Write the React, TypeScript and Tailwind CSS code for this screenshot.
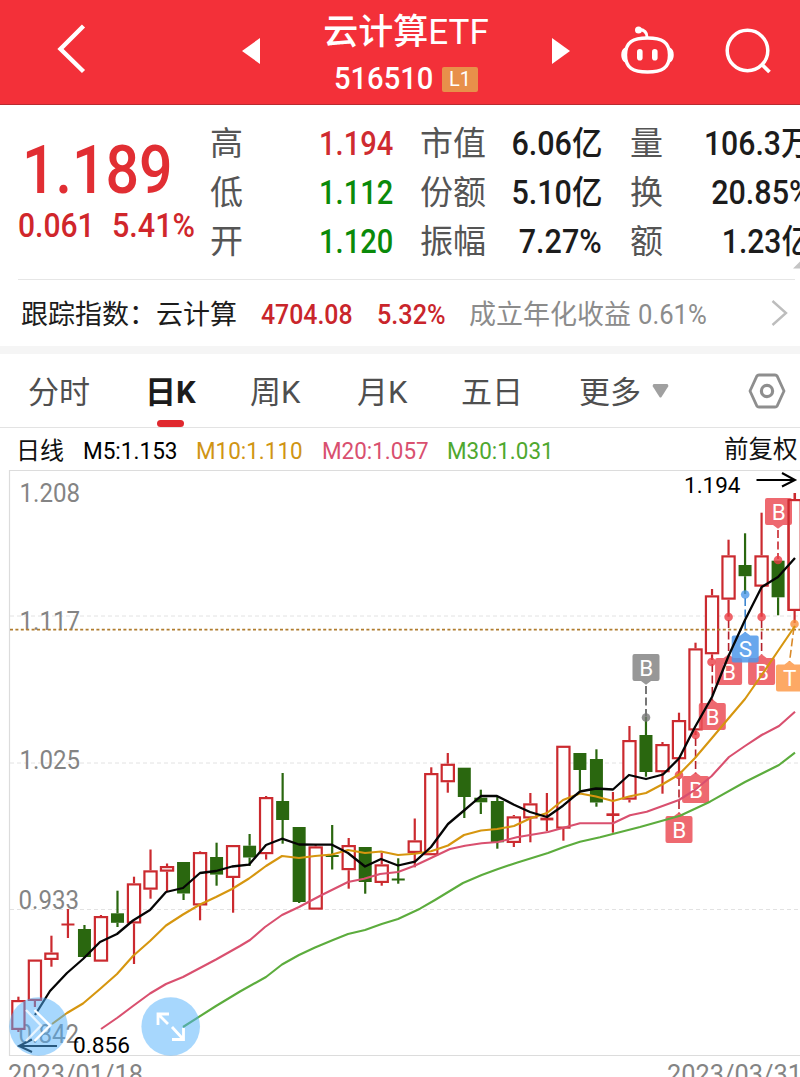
import React from "react";

type Candle = { up: boolean; high: number; top: number; bottom: number; low: number };

const c = (kind: "r" | "g", high: number, top: number, bottom: number, low: number): Candle => ({
  up: kind === "r",
  high,
  top,
  bottom,
  low,
});

const candles: Candle[] = [
  c("r", 996.7, 1000, 1030, 1032),
  c("r", 959.5, 959.5, 1001, 1007),
  c("r", 935.7, 952.5, 960, 966.7),
  c("r", 909, 923.5, 925.5, 938),
  c("g", 925, 929, 957, 957.5),
  c("r", 915, 916, 961.7, 961.7),
  c("g", 890.7, 913.3, 922.8, 927),
  c("r", 876.7, 883.3, 923.5, 964),
  c("r", 849.5, 870.3, 889.7, 898.7),
  c("r", 863.5, 866, 871.7, 891.5),
  c("g", 862, 862, 893.5, 900),
  c("r", 851.3, 852, 905.5, 920.3),
  c("g", 842.7, 857, 874.6, 885.7),
  c("r", 845, 845, 878, 912.7),
  c("g", 834, 845.7, 857.5, 866),
  c("r", 796, 797, 854.2, 859.5),
  c("g", 773, 801, 820, 843.7),
  c("g", 827, 827, 902, 903),
  c("r", 845, 846.3, 909.7, 909.7),
  c("g", 825, 855, 857, 869.5),
  c("r", 838, 845, 870.2, 888.7),
  c("g", 847, 847, 882, 893.7),
  c("r", 852.7, 864.3, 883, 885.7),
  c("g", 858.3, 878.5, 880.5, 883.7),
  c("r", 818.5, 840.3, 853, 867.3),
  c("r", 767.3, 773, 855.3, 855.3),
  c("r", 753, 763.7, 782.3, 792.7),
  c("g", 767.7, 767.7, 797, 818),
  c("g", 789.7, 797.7, 802.3, 814),
  c("g", 796, 801, 842.3, 848.7),
  c("r", 815, 816.3, 843, 847),
  c("r", 793, 803.3, 818.5, 842.3),
  c("r", 793, 817.6, 820.4, 831),
  c("r", 745.7, 745.7, 828.7, 840.7),
  c("g", 753, 753, 770, 790.7),
  c("g", 749.3, 759, 802.5, 806.7),
  c("r", 792, 813.3, 816, 832.7),
  c("r", 726, 740, 799.7, 802.5),
  c("g", 716.7, 735, 772, 776.7),
  c("r", 742, 744, 772.3, 793.7),
  c("r", 712.7, 720, 759.3, 775),
  c("r", 642.7, 648.3, 730.5, 735),
  c("r", 589, 595.3, 654.3, 660),
  c("r", 539.7, 555.3, 599.7, 616.7),
  c("g", 533.3, 565, 576.2, 594),
  c("r", 512.7, 555.3, 586.7, 616.7),
  c("g", 560.7, 560.7, 597.3, 615.3),
  c("r", 493, 499, 611, 623),
];

const candleX = (i: number) => 18.4 + i * 16.515;

const ma5 =
  "35,1015 50,991 67,973 83,959 100,942 117,934 133,920.5 150,910 166,892 183,888 200,873 216,871 232,866.5 249,864.7 266,845 282,838.7 299,844.5 315,844.7 332,844.7 348,853 365,866.5 381,859 398,865.5 415,861.7 431,847 448,824 464,810.5 481,796 497,796 514,804.7 530,812 547,817 563,805.7 580,791.5 596,788.5 613,789.5 629,775 646,779 663,774.5 679,758.5 695,727 712,697 728.5,656 745,620 761.7,587 778,577 795,558";
const ma10 =
  "52,1024 67,1013 83,1003.5 100,989 117,974 133,956 150,941 166,925.5 183,914.5 200,904.5 216,897 232,889 249,878.5 266,866 282,856 299,858 315,856 332,854.5 348,850 365,853 381,851.5 398,855 415,853.7 431,851.3 448,845.5 464,835 481,830.5 497,829 514,826 530,818.5 547,813 563,800 580,793.5 596,796.5 613,801 629,796.5 646,793 663,784 679,774.5 695,758 712,738 728,719 745,699 761,676 778,651 795,626";
const ma20 =
  "101,1029 117,1018 133,1006 150,993.5 166,984 183,977 216,959.5 240,946 250,940 265,927 282,915 299,907 321.7,895 348,882 364,878.7 380,874 398,872 414,866 431,858 450,849 465,845.7 481.7,843.3 498,842 516.7,837.3 548,832 580,823.3 613,823.3 630,815.3 646.7,811.7 679,800 695.7,789.3 711.7,776 729,757 745,746 761.7,735 779,726 795,711.7";
const ma30 =
  "183,1027 216,1006 240,991.5 266,977 282,964.5 299,955 315,947.5 333,940 348,934 365,930 381.7,924 398,919 420,908.7 435,900 463,883 481.7,875 498,869 516.7,862.7 548,853 564,847 580,841.7 600,837.3 640,827 680,815.7 710,801.7 745,782 779,765 795,752.7";

function CandleShape({ d, x }: { d: Candle; x: number }) {
  const color = d.up ? "#cb2a2f" : "#2a670f";
  const h = d.bottom - d.top;
  if (h < 3.5) {
    return (
      <g fill={color}>
        <rect x={x - 1.1} y={d.high} width={2.2} height={d.low - d.high} />
        <rect x={x - 6.5} y={d.top} width={13} height={h} />
      </g>
    );
  }
  return (
    <g fill={color}>
      <rect x={x - 1.1} y={d.high} width={2.2} height={d.top - d.high} />
      <rect x={x - 1.1} y={d.bottom} width={2.2} height={Math.max(0, d.low - d.bottom)} />
      {d.up ? (
        <rect x={x - 6.1} y={d.top + 1.1} width={12.2} height={h - 2.2} fill="#fff" stroke={color} strokeWidth={2.2} />
      ) : (
        <rect x={x - 6.5} y={d.top} width={13} height={h} />
      )}
    </g>
  );
}

type Mark = { x: number; y: number; tip: number; label: string; fill: string; down?: boolean };

const marks: Mark[] = [
  { x: 646, y: 654, tip: 646, label: "B", fill: "#858585", down: true },
  { x: 778.5, y: 498, tip: 778, label: "B", fill: "#eb4f57", down: true },
  { x: 728.6, y: 658, tip: 728.6, label: "B", fill: "#eb4f57" },
  { x: 761.6, y: 658, tip: 761.6, label: "B", fill: "#eb4f57" },
  { x: 745.2, y: 635.5, tip: 745.2, label: "S", fill: "#4d98ea" },
  { x: 789.5, y: 664.5, tip: 789.5, label: "T", fill: "#fd9a4a" },
  { x: 712.3, y: 703, tip: 712.3, label: "B", fill: "#eb4f57" },
  { x: 695.6, y: 776, tip: 695.6, label: "B", fill: "#eb4f57" },
  { x: 679, y: 816, tip: 679, label: "B", fill: "#eb4f57" },
];

const links = [
  { x1: 646, y1: 686, x2: 646, y2: 716, s: "#555" },
  { x1: 778, y1: 530, x2: 778, y2: 559, s: "#c9252c" },
  { x1: 728.6, y1: 620, x2: 728.6, y2: 655, s: "#b3202a" },
  { x1: 761.6, y1: 620, x2: 761.6, y2: 655, s: "#b3202a" },
  { x1: 745.2, y1: 598, x2: 745.2, y2: 633, s: "#3f86cf" },
  { x1: 794, y1: 627, x2: 789.5, y2: 662, s: "#d98a2a" },
  { x1: 712.3, y1: 664, x2: 712.3, y2: 701, s: "#b3202a" },
  { x1: 695.6, y1: 738, x2: 695.6, y2: 774, s: "#b3202a" },
  { x1: 679, y1: 778, x2: 679, y2: 814, s: "#b3202a" },
];

const dots = [
  { x: 646, y: 717.5, f: "#777" },
  { x: 778, y: 560, f: "#eb3d45" },
  { x: 728.6, y: 617, f: "#eb3d45" },
  { x: 761.6, y: 617, f: "#eb3d45" },
  { x: 745.2, y: 594.5, f: "#4d98ea" },
  { x: 794.5, y: 624, f: "#f98f3c" },
  { x: 711.5, y: 662, f: "#eb3d45" },
  { x: 695.6, y: 735, f: "#eb3d45" },
  { x: 679, y: 775, f: "#eb3d45" },
];

function MarkShape({ m }: { m: Mark }) {
  return (
    <g>
      <path
        fill={m.fill}
        fillOpacity={0.85}
        d={
          m.down
            ? `M${m.x - 11.5} ${m.y}h23a2 2 0 0 1 2 2v23a2 2 0 0 1 -2 2H${m.tip + 5}l-5 3.8l-5 -3.8H${m.x - 11.5}a2 2 0 0 1 -2 -2v-23a2 2 0 0 1 2 -2Z`
            : `M${m.x - 11.5} ${m.y}H${m.tip - 5}l5 -3.8l5 3.8H${m.x + 11.5}a2 2 0 0 1 2 2v23a2 2 0 0 1 -2 2h-23a2 2 0 0 1 -2 -2v-23a2 2 0 0 1 2 -2Z`
        }
      />
      <text x={m.x + 0.3} y={m.y + 21.5} fontSize={22.5} fontWeight={450} fill="#fff" textAnchor="middle">
        {m.label}
      </text>
    </g>
  );
}

const axis = [
  { v: "1.208", x: 19.5, y: 502 },
  { v: "1.117", x: 19.5, y: 629.5 },
  { v: "1.025", x: 19.5, y: 769 },
  { v: "0.933", x: 18.5, y: 908.5 },
  { v: "0.842", x: 18.5, y: 1042.5 },
];

function Chart() {
  return (
    <svg
      className="block h-[586px] w-[800px] shrink-0 font-['Roboto','Noto_Sans_CJK_SC',sans-serif]"
      viewBox="0 470 800 586"
    >
      <path d="M800 470.5H9.5V1055.5H800" fill="none" stroke="#dcdcdc" strokeWidth={1.2} />
      {[616, 763, 909.5].map((y) => (
        <path key={y} d={`M10 ${y}H800`} stroke="#e2e2e2" strokeWidth={1} strokeDasharray="4 3" />
      ))}
      {axis.map((a) => (
        <text
          key={a.v}
          x={a.x}
          y={a.y}
          fontSize={26}
          fontWeight={450}
          fill="#848484"
          textLength={60.5}
          lengthAdjust="spacingAndGlyphs"
        >
          {a.v}
        </text>
      ))}
      {candles.map((d, i) => (
        <CandleShape key={i} d={d} x={candleX(i)} />
      ))}
      <path d="M10 629.7H800" stroke="#b07c2e" strokeWidth={1.7} strokeDasharray="3 2.4" />
      {links.map((l, i) => (
        <line key={i} x1={l.x1} y1={l.y1} x2={l.x2} y2={l.y2} stroke={l.s} strokeWidth={1.6} strokeDasharray="8 3.5" />
      ))}
      {dots.map((d, i) => (
        <circle key={i} cx={d.x} cy={d.y} r={4.3} fill={d.f} fillOpacity={0.8} />
      ))}
      {marks.map((m, i) => (
        <MarkShape key={i} m={m} />
      ))}
      <g fill="none" strokeWidth={2.1} strokeLinejoin="round">
        <path d="M795 493V499M800 500H788.6V610H800" stroke="#cb2a2f" />
        <polyline points={ma30} stroke="#5cac3d" />
        <polyline points={ma20} stroke="#d9506f" />
        <polyline points={ma10} stroke="#d6960f" />
        <polyline points={ma5} stroke="#050505" strokeWidth={2.3} />
        <path d="M756.5 480H794M782 473L795 480L782 486.5" stroke="#000" strokeWidth={2} strokeLinejoin="miter" />
        <path d="M57 1046H20M32 1039.5L19 1046L32 1052" stroke="#000" strokeWidth={2} strokeLinejoin="miter" />
      </g>
      <text x={684} y={493} fontSize={22} textLength={56.5} lengthAdjust="spacingAndGlyphs">
        1.194
      </text>
      <text x={73} y={1053} fontSize={22} textLength={57} lengthAdjust="spacingAndGlyphs">
        0.856
      </text>
      <g fill="#4fb0fb" fillOpacity={0.5}>
        <circle cx={38.5} cy={1026.5} r={29.3} />
        <circle cx={170.7} cy={1026.5} r={29.3} />
      </g>
      <g fill="none" stroke="#fff" strokeWidth={2.4}>
        <path d="M26 1010L41 1025.5L26 1041" strokeOpacity={0.75} />
        <path d="M34.5 1010L50 1025.5L34.5 1041" />
        <path
          d="M158 1025V1014H169M158 1014L168 1024M172 1027L183 1039M172 1039.5H183.500V1028"
          strokeWidth={2.8}
        />
      </g>
    </svg>
  );
}

function Header() {
  return (
    <header className="flex h-[105px] shrink-0 items-center border-b border-[#b92a30] bg-[#f33039] pl-[57px] text-white">
      <svg className="mb-[6px] h-[50px] w-[29px] shrink-0" viewBox="0 0 29 50" fill="none">
        <path d="M26.500 2L3.500 25L26.500 47.500" stroke="#fff" strokeWidth="4.4" />
      </svg>
      <svg className="mb-[3px] ml-[156px] h-[28px] w-[18px] shrink-0" viewBox="0 0 18 28">
        <path d="M18 1V27L0 14Z" fill="#fff" />
      </svg>
      <div className="flex h-full w-[292px] shrink-0 flex-col items-center pt-[14px]">
        <div className="text-[35px] leading-[38px] font-[450]">云计算ETF</div>
        <div className="mt-[7px] flex h-[38px] items-center">
          <div className="w-[108px] pt-[2px] font-medium">
            <span className="block w-max origin-left scale-x-[0.925] text-[31.5px] leading-none">516510</span>
          </div>
          <div className="mt-[2px] flex h-[25px] w-[36px] items-center justify-center rounded-[2px] bg-[#e8904a] text-[20px] leading-none">
            L1
          </div>
        </div>
      </div>
      <svg className="mb-[3px] h-[28px] w-[18px] shrink-0" viewBox="0 0 18 28">
        <path d="M0 1V27L18 14Z" fill="#fff" />
      </svg>
      <svg className="mb-[4px] ml-[51px] h-[50px] w-[53px] shrink-0" viewBox="0 0 53 50" fill="none">
        <path
          d="M26.500 13C41 13 48.500 17 48.500 30C48.500 43 41 47 26.500 47C12 47 4.500 43 4.500 30C4.500 17 12 13 26.500 13Z"
          stroke="#fff"
          strokeWidth="3.4"
        />
        <path d="M4 23.500C0 26 0 34 4 36.500ZM49 23.500C53 26 53 34 49 36.500Z" fill="#fff" stroke="#fff" strokeWidth="1.5" />
        <path d="M18 4.500C23 4.500 26 6.500 26 12.500" stroke="#fff" strokeWidth="3" />
        <circle cx="17.500" cy="5" r="3.500" fill="#fff" />
        <rect x="16" y="24" width="5.600" height="11.500" rx="2.800" fill="#fff" />
        <rect x="31" y="24" width="5.600" height="11.500" rx="2.800" fill="#fff" />
      </svg>
      <svg className="mb-[3px] ml-[51px] h-[48px] w-[48px] shrink-0" viewBox="0 0 48 48" fill="none">
        <circle cx="22.500" cy="23.500" r="20.300" stroke="#fff" strokeWidth="3.500" />
        <path d="M36.500 37L44.500 45" stroke="#fff" strokeWidth="3.800" />
      </svg>
    </header>
  );
}

type Stat = { label: string; value: string; tone: string };

function StatColumn({ items, className }: { items: Stat[]; className: string }) {
  return (
    <div className={className}>
      {items.map((s) => (
        <div key={s.label} className="flex h-[49px] items-center justify-between leading-none whitespace-nowrap">
          <span className="text-[33px] text-[#555]">{s.label}</span>
          <span className={`origin-right text-[33px] font-medium ${s.tone}`}>{s.value}</span>
        </div>
      ))}
    </div>
  );
}

function Quote() {
  return (
    <section className="relative flex h-[174px] shrink-0 overflow-hidden bg-white pt-[14px]">
      <div className="w-[210px] shrink-0 text-[#e12e33]">
        <div className="mt-[17px] ml-[22px] h-[68px] w-max origin-left scale-x-[0.875] text-[67.5px] leading-[68px] font-medium">
          1.189
        </div>
        <div className="mt-[5px] flex h-[34px] text-[33px] leading-[34px] font-medium text-[#d0262b]">
          <span className="ml-[18px] w-[94px] origin-left scale-x-[0.91]">0.061</span>
          <span className="origin-left scale-x-[0.925]">5.41%</span>
        </div>
      </div>
      <StatColumn
        className="w-[183px] shrink-0"
        items={[
          { label: "高", value: "1.194", tone: "text-[#cf2b30] scale-x-[0.88]" },
          { label: "低", value: "1.112", tone: "text-[#0a8a0a] scale-x-[0.88]" },
          { label: "开", value: "1.120", tone: "text-[#0a8a0a] scale-x-[0.88]" },
        ]}
      />
      <StatColumn
        className="ml-[27px] w-[182px] shrink-0"
        items={[
          { label: "市值", value: "6.06亿", tone: "text-[#1c1c1c] scale-x-[0.925]" },
          { label: "份额", value: "5.10亿", tone: "text-[#1c1c1c] scale-x-[0.925]" },
          { label: "振幅", value: "7.27%", tone: "text-[#1c1c1c] scale-x-[0.925]" },
        ]}
      />
      <StatColumn
        className="ml-[28px] w-[181px] shrink-0"
        items={[
          { label: "量", value: "106.3万", tone: "text-[#1c1c1c] scale-x-[0.915]" },
          { label: "换", value: "20.85%", tone: "text-[#1c1c1c] scale-x-[0.925]" },
          { label: "额", value: "1.23亿", tone: "text-[#1c1c1c] scale-x-[0.91]" },
        ]}
      />
      <svg className="absolute right-0 bottom-[10px] h-[8px] w-[7px]" viewBox="0 0 9 9">
        <path d="M9 0V9H0Z" fill="#c4c4c4" />
      </svg>
    </section>
  );
}

function IndexRow() {
  return (
    <section className="flex h-[67px] shrink-0 flex-col bg-white">
      <div className="ml-[18px] h-px w-[777px] shrink-0 bg-[#e6e6e6]" />
      <div className="flex h-[66px] items-center pt-[4px] pl-[21px] text-[27px] leading-none whitespace-nowrap">
        <span className="w-[135px] text-[#1c1c1c]">跟踪指数：</span>
        <span className="w-[105px] text-[#1c1c1c]">云计算</span>
        <span className="w-[116px] origin-left scale-x-[0.92] font-medium text-[#c9252b]">4704.08</span>
        <span className="w-[92px] origin-left scale-x-[0.935] font-medium text-[#c9252b]">5.32%</span>
        <span className="w-[169px] text-[#8c8c8c]">成立年化收益</span>
        <span className="w-[132px] origin-left scale-x-[0.95] text-[#8c8c8c]">0.61%</span>
        <svg className="mb-[5px] h-[28px] w-[18px]" viewBox="0 0 18 28" fill="none">
          <path d="M2.500 2L16 14L2.500 26" stroke="#bdbdbd" strokeWidth="2.4" />
        </svg>
      </div>
    </section>
  );
}

function Tabs() {
  return (
    <nav className="flex h-[74px] shrink-0 border-b border-[#e3e3e3] bg-white pl-[28px] text-[31px] leading-[78px] whitespace-nowrap text-[#4f4f4f]">
      <span className="w-[117px]">分时</span>
      <span className="relative w-[105px] font-bold text-[#1c1c1c]">
        日K
        <span className="absolute bottom-0 left-[12px] h-[7px] w-[27px] rounded-full bg-[#e0282e]" />
      </span>
      <span className="w-[107px]">周K</span>
      <span className="w-[104px]">月K</span>
      <span className="w-[118px]">五日</span>
      <span className="w-[73px]">更多</span>
      <svg className="mt-[30px] h-[15px] w-[17px]" viewBox="0 0 17 15">
        <path d="M1.500 0H15.500L16.500 2L9.500 13Q8.500 14 7.500 13L0.500 2Z" fill="#a0a0a0" />
      </svg>
      <svg
        className="mt-[19px] ml-[79px] h-[36px] w-[38px]"
        viewBox="0 0 38 36"
        fill="none"
        stroke="#8e8e8e"
        strokeWidth="2.800"
        strokeLinejoin="round"
      >
        <path d="M11 2H27Q28.500 2 29.300 3.300L36 18L29.300 32.700Q28.500 34 27 34H11Q9.500 34 8.700 32.700L2 18L8.700 3.300Q9.500 2 11 2Z" />
        <circle cx="19" cy="18" r="5.600" strokeWidth="3.200" />
      </svg>
    </nav>
  );
}

function Legend() {
  return (
    <div className="flex h-[42px] shrink-0 items-center bg-white pt-[3px] pl-[16px] text-[24px] leading-none whitespace-nowrap">
      <span className="w-[67px] text-[#111]">日线</span>
      <span className="w-[113px] origin-left scale-x-[0.94] text-black">M5:1.153</span>
      <span className="w-[126px] origin-left scale-x-[0.935] text-[#d09514]">M10:1.110</span>
      <span className="w-[125px] origin-left scale-x-[0.935] text-[#d9506f]">M20:1.057</span>
      <span className="w-[277px] origin-left scale-x-[0.935] text-[#4fa82f]">M30:1.031</span>
      <span className="text-[24.5px] text-[#111]">前复权</span>
    </div>
  );
}

export default function App() {
  return (
    <div className="flex h-[1077px] w-[800px] flex-col overflow-hidden bg-white font-['Roboto','Noto_Sans_CJK_SC',sans-serif]">
      <Header />
      <Quote />
      <IndexRow />
      <div className="h-[8px] shrink-0 bg-[#f5f5f5]" />
      <Tabs />
      <Legend />
      <Chart />
      <div className="-mr-[2px] flex h-[21px] shrink-0 justify-between pt-[4px] pl-[8px] text-[25.4px] leading-[28px] font-[450] text-[#848484]">
        <span>2023/01/18</span>
        <span>2023/03/31</span>
      </div>
    </div>
  );
}
